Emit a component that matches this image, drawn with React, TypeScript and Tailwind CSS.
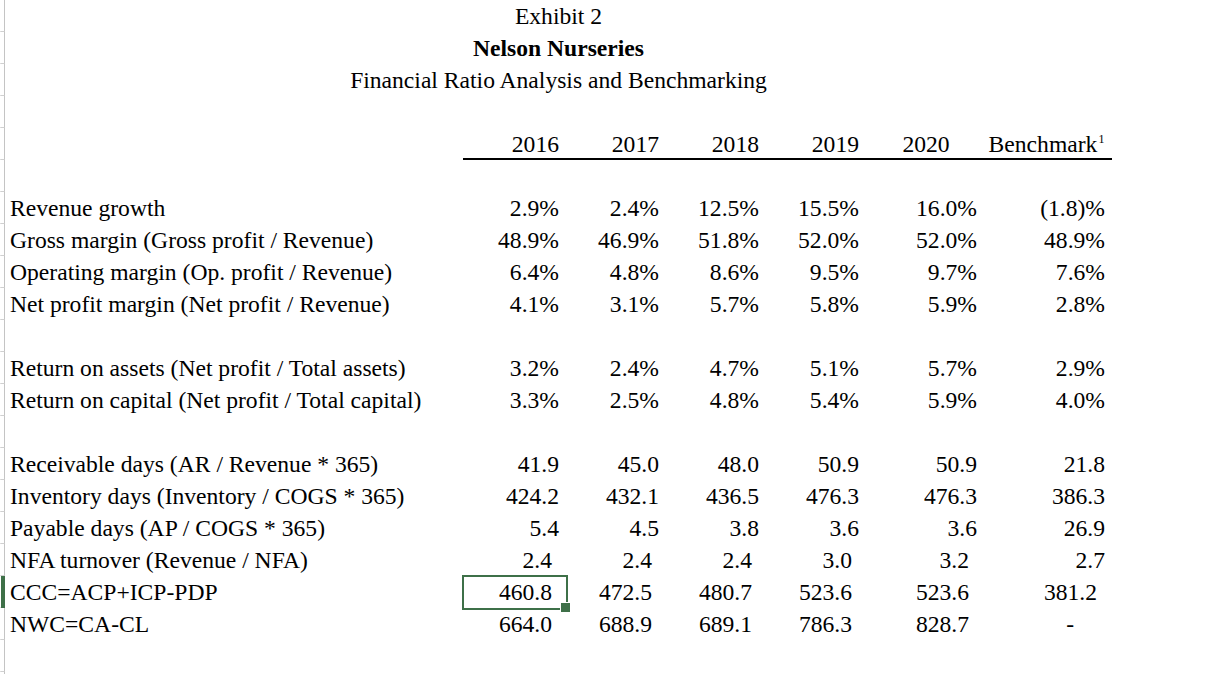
const widths = ["w-[104px]", "w-[100px]", "w-[100px]", "w-[100px]", "w-[118px]", "w-[127px]"]

type DataRow = { label: string; values: string[]; pads?: string[] }

const base = ["pr-[8px]", "pr-[8px]", "pr-[8px]", "pr-[8px]", "pr-[8px]", "pr-[7px]"]
const shifted = ["pr-[15px]", "pr-[15px]", "pr-[15px]", "pr-[15px]", "pr-[16px]", "pr-[7px]"]

const rows: (DataRow | null | "title" | "header")[] = [
  "title",
  null,
  null,
  null,
  "header",
  null,
  { label: "Revenue growth", values: ["2.9%", "2.4%", "12.5%", "15.5%", "16.0%", "(1.8)%"] },
  { label: "Gross margin (Gross profit / Revenue)", values: ["48.9%", "46.9%", "51.8%", "52.0%", "52.0%", "48.9%"] },
  { label: "Operating margin (Op. profit / Revenue)", values: ["6.4%", "4.8%", "8.6%", "9.5%", "9.7%", "7.6%"] },
  { label: "Net profit margin (Net profit / Revenue)", values: ["4.1%", "3.1%", "5.7%", "5.8%", "5.9%", "2.8%"] },
  null,
  { label: "Return on assets (Net profit / Total assets)", values: ["3.2%", "2.4%", "4.7%", "5.1%", "5.7%", "2.9%"] },
  { label: "Return on capital (Net profit / Total capital)", values: ["3.3%", "2.5%", "4.8%", "5.4%", "5.9%", "4.0%"] },
  null,
  { label: "Receivable days (AR / Revenue * 365)", values: ["41.9", "45.0", "48.0", "50.9", "50.9", "21.8"] },
  { label: "Inventory days (Inventory / COGS * 365)", values: ["424.2", "432.1", "436.5", "476.3", "476.3", "386.3"] },
  { label: "Payable days (AP / COGS * 365)", values: ["5.4", "4.5", "3.8", "3.6", "3.6", "26.9"] },
  { label: "NFA turnover (Revenue / NFA)", values: ["2.4", "2.4", "2.4", "3.0", "3.2", "2.7"], pads: shifted },
  {
    label: "CCC=ACP+ICP-PDP",
    values: ["460.8", "472.5", "480.7", "523.6", "523.6", "381.2"],
    pads: [...shifted.slice(0, 5), "pr-[15px]"],
  },
  {
    label: "NWC=CA-CL",
    values: ["664.0", "688.9", "689.1", "786.3", "828.7", "-"],
    pads: [...shifted.slice(0, 5), "pr-[38px]"],
  },
  null,
  null,
]

const titles = [
  { text: "Exhibit 2", bold: false },
  { text: "Nelson Nurseries", bold: true },
  { text: "Financial Ratio Analysis and Benchmarking", bold: false },
]

function Gutter({ active }: { active?: boolean }) {
  return (
    <div className="w-[5px] shrink-0 flex">
      <div className="w-[1px] border-b border-[#dcdcdc]" />
      <div
        className={
          active
            ? "w-[4px] bg-[#3e7048]"
            : "w-[4px] border-b border-r border-[#d0d0d0] border-r-[#c4c4c4]"
        }
      />
    </div>
  )
}

export default function App() {
  return (
    <div className="h-[674px] w-[1226px] overflow-hidden bg-white text-black font-['Liberation_Serif','Times_New_Roman',serif] text-[23.6px] leading-[32px]">
      {rows.map((row, i) => {
        if (row === "title") {
          return (
            <div key={i}>
              {titles.map((t) => (
                <div key={t.text} className="flex h-[32px]">
                  <Gutter />
                  <div className={`w-[1107px] text-center ${t.bold ? "font-bold" : ""}`}>{t.text}</div>
                </div>
              ))}
            </div>
          )
        }
        if (i > 0 && i < 3) return null
        if (row === "header") {
          const years = ["2016", "2017", "2018", "2019"]
          return (
            <div key={i} className="flex h-[32px]">
              <Gutter />
              <div className="w-[458px]" />
              {years.map((y, j) => (
                <div key={y} className={`${widths[j]} border-b-2 border-black text-right pr-[8px]`}>
                  {y}
                </div>
              ))}
              <div className={`${widths[4]} border-b-2 border-black text-center`}>2020</div>
              <div className={`${widths[5]} border-b-2 border-black text-center pr-[4px]`}>
                Benchmark
                <span className="text-[12px] relative -top-[9px] ml-[1px]">1</span>
              </div>
            </div>
          )
        }
        if (row === null) {
          return (
            <div key={i} className="flex h-[32px]">
              <Gutter />
            </div>
          )
        }
        const pads = row.pads ?? base
        const active = row.label.startsWith("CCC")
        return (
          <div key={i} className="flex h-[32px] whitespace-nowrap">
            <Gutter active={active} />
            <div className="w-[458px] pl-[5px]">{row.label}</div>
            {row.values.map((v, j) => (
              <div key={j} className={`${widths[j]} ${pads[j]} text-right relative`}>
                {v}
                {active && j === 0 && (
                  <>
                    <div className="absolute -top-[1px] -bottom-[2px] -left-[1px] -right-[1px] border-2 border-[#3e7048]" />
                    <div className="absolute right-[-4px] bottom-[-5px] w-[11px] h-[11px] bg-[#3e7048] border border-white" />
                  </>
                )}
              </div>
            ))}
          </div>
        )
      })}
    </div>
  )
}
